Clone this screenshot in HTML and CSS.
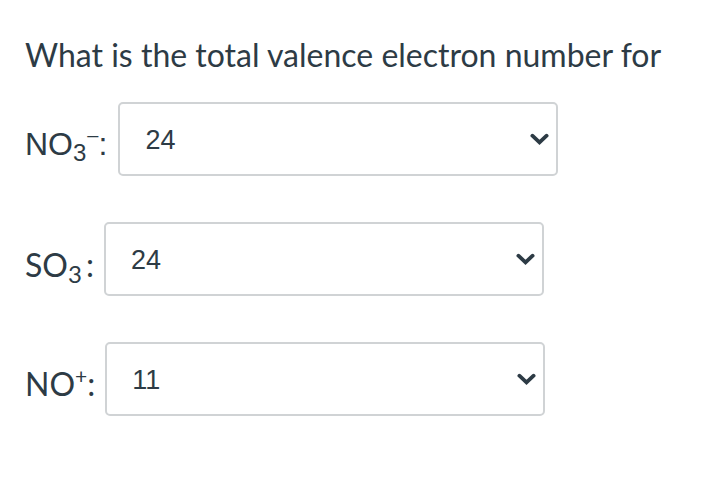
FILE: index.html
```html
<!DOCTYPE html>
<html>
<head>
<meta charset="utf-8">
<link rel="stylesheet" href="styles.css">
</head>
<body>
<div class="question">
  <p class="prompt">What is the total valence electron number for</p>
  <div class="row">
    <span class="label label-arial">NO<span class="sub">3</span><span class="sup">&#8211;</span>:</span>
    <div class="select"><span class="value">24</span><svg class="chev" viewBox="0 0 20 12" width="19" height="12"><path d="M2.5 2.5 L10 9.5 L17.5 2.5" fill="none" stroke="#2d3b45" stroke-width="4" stroke-linecap="round" stroke-linejoin="miter"/></svg></div>
  </div>
  <div class="row">
    <span class="label">SO<span class="sub">3</span>&#8201;:</span>
    <div class="select"><span class="value">24</span><svg class="chev" viewBox="0 0 20 12" width="19" height="12"><path d="M2.5 2.5 L10 9.5 L17.5 2.5" fill="none" stroke="#2d3b45" stroke-width="4" stroke-linecap="round" stroke-linejoin="miter"/></svg></div>
  </div>
  <div class="row">
    <span class="label">NO<span class="sup2">+</span>:</span>
    <div class="select"><span class="value">11</span><svg class="chev" viewBox="0 0 20 12" width="19" height="12"><path d="M2.5 2.5 L10 9.5 L17.5 2.5" fill="none" stroke="#2d3b45" stroke-width="4" stroke-linecap="round" stroke-linejoin="miter"/></svg></div>
  </div>
</div>
</body>
</html>
```
FILE: styles.css
```css
html, body {
  margin: 0;
  padding: 0;
  background: #ffffff;
}
body {
  font-family: Lato, "Liberation Sans", sans-serif;
  color: #2d3b45;
}
.question {
  padding: 35px 0 0 25px;
}
.prompt {
  margin: 0 0 27px 0;
  font-size: 32px;
  line-height: 40px;
}
.row {
  display: flex;
  align-items: center;
  margin-bottom: 46px;
}
.label {
  font-size: 32px;
  line-height: 32px;
  margin-top: 14px;
  margin-right: 10px;
  white-space: nowrap;
}
.label-arial {
  font-family: "Liberation Sans", Arial, sans-serif;
  margin-right: 11px;
}
.sub {
  font-size: 24px;
  position: relative;
  top: 6px;
}
.sup {
  font-size: 20px;
  position: relative;
  top: -13px;
  margin-left: 1px;
}
.sup2 {
  font-size: 21px;
  position: relative;
  top: -12px;
}
.select {
  box-sizing: border-box;
  width: 440px;
  height: 74px;
  border: 2px solid #d0d3d5;
  border-radius: 5px;
  display: flex;
  align-items: center;
  justify-content: space-between;
  padding: 0 7px 0 25px;
}
.value {
  font-family: "Liberation Sans", Arial, sans-serif;
  font-size: 27px;
  margin-top: 3px;
}
.chev {
  display: block;
}
```
